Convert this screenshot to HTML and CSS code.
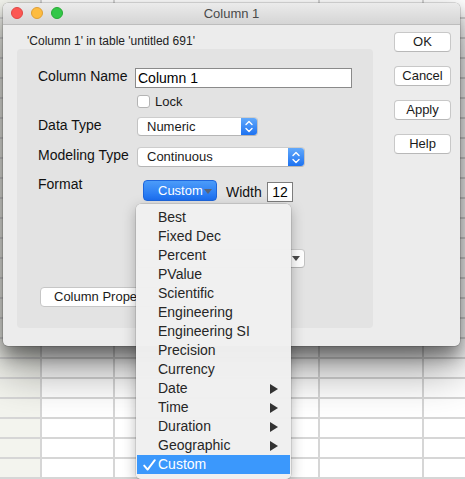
FILE: index.html
```html
<!DOCTYPE html>
<html>
<head>
<meta charset="utf-8">
<title>Column 1</title>
<link rel="stylesheet" href="styles.css">
</head>
<body>
<div class="sheet"></div>

<div class="window">
  <div class="titlebar">
    <div class="lights">
      <span class="light red"></span>
      <span class="light yellow"></span>
      <span class="light green"></span>
    </div>
    <div class="title">Column 1</div>
    <div></div>
  </div>

  <div class="content">
    <div class="main">
      <div class="caption">'Column 1' in table 'untitled 691'</div>
      <div class="panel">
        <div class="row row-name">
          <span class="label">Column Name</span>
          <div class="textbox">Column 1</div>
        </div>
        <div class="row row-lock">
          <span class="label"></span>
          <span class="checkbox"></span>
          <span class="lock">Lock</span>
        </div>
        <div class="row row-type">
          <span class="label">Data Type</span>
          <div class="popup popup-numeric">
            <span class="popup-text">Numeric</span>
            <span class="stepper"><svg width="16" height="19" viewBox="0 0 16 19"><path d="M5 7.5 L8 4.5 L11 7.5 M5 11.5 L8 14.5 L11 11.5" fill="none" stroke="#fff" stroke-width="1.4" stroke-linecap="round" stroke-linejoin="round"/></svg></span>
          </div>
        </div>
        <div class="row row-model">
          <span class="label">Modeling Type</span>
          <div class="popup popup-cont">
            <span class="popup-text">Continuous</span>
            <span class="stepper"><svg width="16" height="19" viewBox="0 0 16 19"><path d="M5 7.5 L8 4.5 L11 7.5 M5 11.5 L8 14.5 L11 11.5" fill="none" stroke="#fff" stroke-width="1.4" stroke-linecap="round" stroke-linejoin="round"/></svg></span>
          </div>
        </div>
        <div class="row row-format">
          <span class="label label-format">Format</span>
          <div class="custom-btn">Custom<span class="tri-down"></span></div>
          <span class="width-label">Width</span>
          <div class="width-box">12</div>
        </div>
        <div class="row row-extra">
          <span class="label"></span>
          <div class="popup popup-extra"><span class="popup-text"></span><span class="tri-small"></span></div>
        </div>
        <div class="row row-props">
          <div class="props-btn">Column Prope</div>
        </div>
      </div>
    </div>
    <div class="buttons">
      <div class="btn">OK</div>
      <div class="btn">Cancel</div>
      <div class="btn">Apply</div>
      <div class="btn">Help</div>
    </div>
  </div>
</div>

<div class="menu">
  <div class="item">Best</div>
  <div class="item">Fixed Dec</div>
  <div class="item">Percent</div>
  <div class="item">PValue</div>
  <div class="item">Scientific</div>
  <div class="item">Engineering</div>
  <div class="item">Engineering SI</div>
  <div class="item">Precision</div>
  <div class="item">Currency</div>
  <div class="item sub">Date<span class="arrow"></span></div>
  <div class="item sub">Time<span class="arrow"></span></div>
  <div class="item sub">Duration<span class="arrow"></span></div>
  <div class="item sub">Geographic<span class="arrow"></span></div>
  <div class="item selected"><svg class="check" width="13" height="12" viewBox="0 0 13 12"><path d="M1.2 6.6 L4.6 10.6 L11.8 1.2" fill="none" stroke="#fff" stroke-width="1.9" stroke-linecap="round" stroke-linejoin="round"/></svg>Custom</div>
</div>
</body>
</html>
```

FILE: styles.css
```css
* { box-sizing: border-box; }

html, body {
  margin: 0;
  padding: 0;
  width: 465px;
  height: 479px;
  overflow: hidden;
}

body {
  position: relative;
  font-family: "Liberation Sans", "Helvetica Neue", Arial, sans-serif;
  color: #1e1e1e;
  background: #ffffff;
}

/* spreadsheet behind the dialog */
.sheet {
  position: absolute;
  left: 0;
  top: 0;
  width: 465px;
  height: 479px;
  background-color: #ffffff;
  background-image:
    linear-gradient(to right, transparent 40px, #d6d6d6 40px, #d6d6d6 42px, transparent 42px),
    linear-gradient(to right, transparent 113px, #d6d6d6 113px, #d6d6d6 115px, transparent 115px),
    linear-gradient(to right, transparent 318px, #d6d6d6 318px, #d6d6d6 320px, transparent 320px),
    linear-gradient(to right, transparent 422px, #d6d6d6 422px, #d6d6d6 424px, transparent 424px),
    repeating-linear-gradient(to bottom, transparent 0, transparent 17px, #d6d6d6 17px, #d6d6d6 19px, transparent 19px, transparent 20px),
    linear-gradient(to right, #f3f4ee 0, #f3f4ee 40px, transparent 40px);
}

/* dialog window */
.window {
  position: absolute;
  left: 3px;
  top: 3px;
  width: 457px;
  height: 343px;
  background: #ececec;
  border-radius: 5px;
  box-shadow: 0 0 0 0.5px rgba(0,0,0,0.25), 0 10px 18px rgba(0,0,0,0.4), 0 24px 46px rgba(0,0,0,0.4);
  overflow: hidden;
}

.titlebar {
  height: 22px;
  display: grid;
  grid-template-columns: 1fr auto 1fr;
  align-items: center;
  background: linear-gradient(to bottom, #ebebeb, #d5d5d5);
  border-bottom: 1px solid #bdbdbd;
}

.lights {
  display: flex;
  gap: 8px;
  padding-left: 8px;
  padding-bottom: 1px;
}

.light {
  width: 12px;
  height: 12px;
  border-radius: 50%;
}
.red { background: #fc5753; border: 0.5px solid #df4744; }
.yellow { background: #fdbc40; border: 0.5px solid #de9f34; }
.green { background: #33c748; border: 0.5px solid #27aa35; }

.title {
  font-size: 13px;
  color: #4a4a4a;
  padding-bottom: 1px;
}

.content {
  display: flex;
}

.main {
  padding-left: 14px;
  width: 378px;
}

.caption {
  padding-top: 9px;
  padding-left: 10px;
  font-size: 12px;
  line-height: 14px;
  height: 23px;
  color: #222;
}

.panel {
  margin-top: 1px;
  width: 356px;
  height: 279px;
  background: #e3e3e3;
  border-radius: 4px;
  padding: 19px 0 0 21px;
  display: flex;
  flex-direction: column;
}

.row {
  display: flex;
  align-items: flex-start;
}

.label {
  width: 99px;
  flex: none;
  font-size: 14px;
  line-height: 16px;
  color: #111;
}

.row-name { height: 20px; }
.row-name .label { width: 97px; }

.textbox {
  width: 217px;
  height: 20px;
  background: #fff;
  border: 1px solid #8a8a8a;
  font-size: 14px;
  line-height: 18px;
  padding-left: 2px;
  color: #000;
}

.row-lock { margin-top: 7px; height: 13px; align-items: center; }
.checkbox {
  width: 13px;
  height: 13px;
  background: #fff;
  border: 1px solid #b4b4b4;
  border-radius: 3px;
}
.lock {
  margin-left: 5px;
  font-size: 13px;
  line-height: 13px;
  color: #1a1a1a;
}

.row-type { margin-top: 9px; height: 19px; }
.row-model { margin-top: 11px; height: 20px; }

.popup {
  height: 19px;
  background: #fff;
  border: 1px solid #c3c3c3;
  border-top-color: #cdcdcd;
  border-bottom-color: #b5b5b5;
  border-radius: 4px;
  display: flex;
  align-items: stretch;
  overflow: hidden;
}
.popup-numeric { width: 121px; }
.popup-cont { width: 168px; height: 20px; }

.popup-text {
  flex: 1;
  font-size: 13px;
  line-height: 17px;
  padding-left: 9px;
  color: #1a1a1a;
}

.stepper {
  width: 16px;
  flex: none;
  background: linear-gradient(to bottom, #62a9fb, #1d72f1);
  display: flex;
  align-items: center;
  justify-content: center;
}
.stepper svg { display: block; }

.row-format { margin-top: 13px; height: 22px; }
.label-format { width: 105px; margin-top: -4px; }

.custom-btn {
  width: 74px;
  height: 21px;
  background: linear-gradient(to bottom, #4b9cf9, #1c6ff1);
  border: 1px solid #1e66dc;
  border-radius: 4px;
  color: #fff;
  font-size: 13px;
  line-height: 19px;
  padding-left: 14px;
  display: flex;
  align-items: center;
}

.tri-down {
  width: 0;
  height: 0;
  border-left: 4px solid transparent;
  border-right: 4px solid transparent;
  border-top: 5px solid #5a6578;
  margin-left: 1px;
  margin-top: 1px;
}

.width-label {
  margin-left: 9px;
  margin-top: 2px;
  font-size: 14px;
  line-height: 20px;
  color: #111;
}

.width-box {
  margin-left: 5px;
  margin-top: 2px;
  width: 26px;
  height: 20px;
  background: #fff;
  border: 1px solid #7d7d7d;
  font-size: 14px;
  line-height: 18px;
  text-align: right;
  padding-right: 4px;
  color: #000;
}

.row-extra { margin-top: 47px; height: 19px; }
.popup-extra { width: 168px; align-items: center; padding-right: 4px; }
.tri-small {
  width: 0;
  height: 0;
  border-left: 4px solid transparent;
  border-right: 4px solid transparent;
  border-top: 5px solid #4a4a4a;
}

.row-props { margin-top: 19px; height: 19px; }
.props-btn {
  margin-left: 2px;
  width: 120px;
  height: 20px;
  background: #fff;
  border: 1px solid #c6c6c6;
  border-radius: 4px;
  font-size: 13px;
  line-height: 18px;
  padding-left: 13px;
  color: #1a1a1a;
  white-space: nowrap;
  overflow: hidden;
}

.buttons {
  padding-top: 7px;
  padding-left: 13px;
  display: flex;
  flex-direction: column;
  gap: 14px;
}

.btn {
  width: 57px;
  height: 20px;
  background: #fff;
  border: 1px solid #c8c8c8;
  border-bottom-color: #b8b8b8;
  border-radius: 4px;
  font-size: 13px;
  line-height: 18px;
  text-align: center;
  color: #1a1a1a;
}

/* popup menu overlay */
.menu {
  position: absolute;
  left: 136px;
  top: 204px;
  width: 155px;
  height: 275px;
  background: rgba(240,240,240,0.98);
  border-radius: 5px;
  box-shadow: 0 0 0 0.5px rgba(0,0,0,0.18), 0 4px 14px rgba(0,0,0,0.28);
  padding: 4px 0;
}

.item {
  height: 19px;
  font-size: 14px;
  line-height: 19px;
  padding-left: 22px;
  color: #262626;
  display: flex;
  align-items: center;
  position: relative;
}

.item.sub { justify-content: space-between; padding-right: 13px; }

.arrow {
  width: 0;
  height: 0;
  border-top: 5px solid transparent;
  border-bottom: 5px solid transparent;
  border-left: 8px solid #333;
}

.item.selected {
  background: #3b98fc;
  color: #fff;
  margin: 0 1px;
  padding-left: 6px;
}

.check {
  display: block;
  flex: none;
  margin-right: 2px;
}
```
